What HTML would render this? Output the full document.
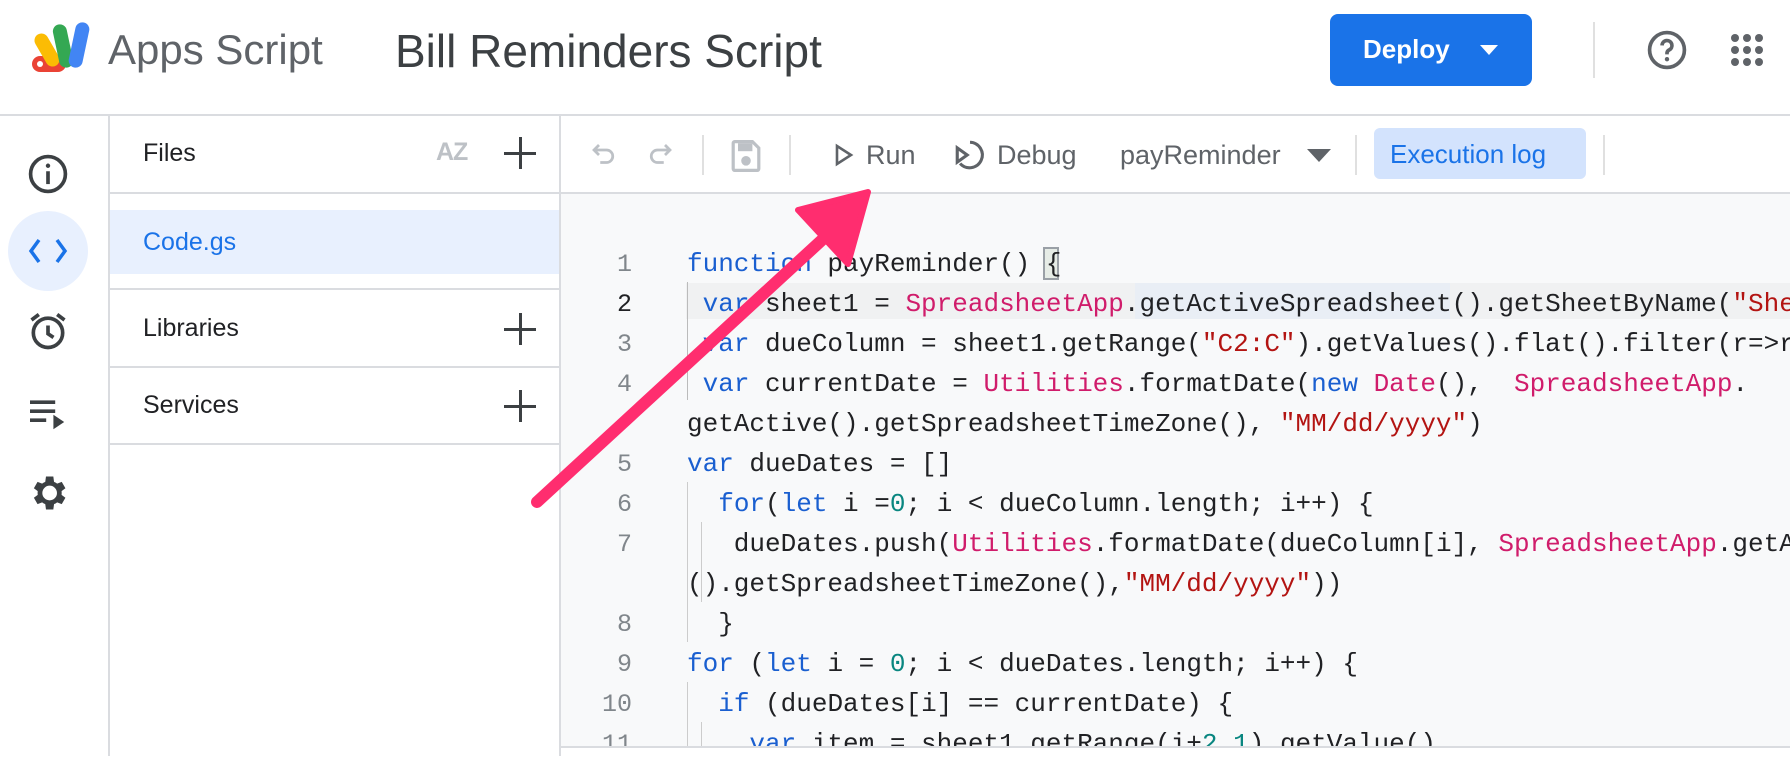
<!DOCTYPE html>
<html><head><meta charset="utf-8"><style>
*{margin:0;padding:0;box-sizing:border-box}
body{width:1790px;height:756px;overflow:hidden;background:#fff;font-family:"Liberation Sans",Arial,sans-serif;position:relative;color:#202124}
.abs{position:absolute}
.hl{border-top:2px solid #dadce0}
.code{font-family:"Liberation Mono",monospace;font-size:26px;color:#202124;white-space:pre;line-height:40px}
.ln{position:absolute;width:72px;text-align:right;left:560px;font-family:"Liberation Mono",monospace;font-size:25px;color:#80868b}
.k{color:#1a5fd0}.c{color:#d01c6b}.s{color:#b31412}.n{color:#098680}
.tb{position:absolute;top:140px;font-size:27px;color:#5f6368}
</style></head><body>
<svg class="abs" style="left:30px;top:22px" width="68" height="54" viewBox="0 0 68 54">
<rect x="2" y="34" width="34" height="16" rx="8" fill="#ea4335"/>
<rect x="10" y="10" width="14" height="36" rx="7" fill="#fbbc04" transform="rotate(-30 17 28)"/>
<rect x="26" y="2" width="14" height="44" rx="7" fill="#34a853" transform="rotate(-12 33 24)"/>
<rect x="42" y="0" width="14" height="46" rx="7" fill="#4285f4" transform="rotate(12 49 23)"/>
<circle cx="10" cy="42" r="3" fill="#fff"/>
</svg>
<div class="abs" style="left:108px;top:26px;font-size:42px;color:#5f6368">Apps Script</div>
<div class="abs" style="left:395px;top:24px;font-size:46px;color:#3c4043">Bill Reminders Script</div>
<div class="abs" style="left:1330px;top:14px;width:202px;height:72px;background:#1a73e8;border-radius:8px;color:#fff;font-size:26px;font-weight:bold">
<span class="abs" style="left:33px;top:20px">Deploy</span>
<span class="abs" style="left:150px;top:31px;border-left:9px solid transparent;border-right:9px solid transparent;border-top:10px solid #fff"></span></div>
<div class="abs" style="left:1593px;top:22px;width:2px;height:56px;background:#e0e0e0"></div>
<svg class="abs" style="left:1645px;top:28px" width="44" height="44" viewBox="0 0 24 24"><circle cx="12" cy="12" r="9.5" fill="none" stroke="#5f6368" stroke-width="2"/><path d="M9.3 9.5a2.7 2.7 0 1 1 3.8 2.5c-.7.4-1.1.9-1.1 1.8v.6" fill="none" stroke="#5f6368" stroke-width="2"/><circle cx="12" cy="17" r="1.2" fill="#5f6368"/></svg>
<svg class="abs" style="left:1730px;top:33px" width="34" height="34" viewBox="0 0 34 34" fill="#5f6368">
<circle cx="5" cy="5" r="4"/><circle cx="17" cy="5" r="4"/><circle cx="29" cy="5" r="4"/><circle cx="5" cy="17" r="4"/><circle cx="17" cy="17" r="4"/><circle cx="29" cy="17" r="4"/><circle cx="5" cy="29" r="4"/><circle cx="17" cy="29" r="4"/><circle cx="29" cy="29" r="4"/></svg>
<div class="abs hl" style="left:0;top:114px;width:1790px"></div>
<div class="abs" style="left:108px;top:115px;width:2px;height:641px;background:#dadce0"></div>
<svg class="abs" style="left:26px;top:152px" width="44" height="44" viewBox="0 0 24 24"><circle cx="12" cy="12" r="9.5" fill="none" stroke="#3c4043" stroke-width="2"/><rect x="11" y="10.5" width="2" height="7" fill="#3c4043"/><circle cx="12" cy="7.5" r="1.2" fill="#3c4043"/></svg>
<div class="abs" style="left:8px;top:211px;width:80px;height:80px;border-radius:50%;background:#e8f0fe"></div>
<svg class="abs" style="left:28px;top:236px" width="40" height="30" viewBox="0 0 40 30"><path d="M11 4 3 15l8 11M29 4l8 11-8 11" fill="none" stroke="#1a73e8" stroke-width="3.5"/></svg>
<svg class="abs" style="left:26px;top:309px" width="44" height="44" viewBox="0 0 24 24" fill="none" stroke="#3c4043" stroke-width="2"><circle cx="12" cy="13" r="8"/><path d="M12 9v4.5l3 2M3 6l4-3M21 6l-4-3"/></svg>
<svg class="abs" style="left:26px;top:395px" width="44" height="36" viewBox="0 0 24 20" fill="#3c4043"><rect x="2" y="3" width="14" height="2"/><rect x="2" y="8" width="14" height="2"/><rect x="2" y="13" width="9" height="2"/><path d="M15 11v8l6-4z"/></svg>
<svg class="abs" style="left:26px;top:471px" width="44" height="44" viewBox="0 0 24 24"><path fill="#3c4043" d="M19.4 13a7.7 7.7 0 0 0 0-2l2.1-1.6-2-3.5-2.5 1a7 7 0 0 0-1.7-1L14.9 3h-4l-.4 2.9a7 7 0 0 0-1.7 1l-2.5-1-2 3.5L6.4 11a7.7 7.7 0 0 0 0 2l-2.1 1.6 2 3.5 2.5-1a7 7 0 0 0 1.7 1l.4 2.9h4l.4-2.9a7 7 0 0 0 1.7-1l2.5 1 2-3.5zM12.9 16a4 4 0 1 1 0-8 4 4 0 0 1 0 8z"/><circle cx="12.9" cy="12" r="2.4" fill="#fff"/></svg>
<div class="abs" style="left:559px;top:115px;width:2px;height:641px;background:#dadce0"></div>
<div class="abs" style="left:143px;top:139px;font-size:25px">Files</div>
<div class="abs" style="left:436px;top:138px;font-size:25px;color:#bdc1c6;font-weight:bold;letter-spacing:-1px">AZ</div>
<div class="abs" style="left:504px;top:152px;width:32px;height:3px;background:#3c4043"></div>
<div class="abs" style="left:519px;top:137px;width:3px;height:32px;background:#3c4043"></div>
<div class="abs hl" style="left:110px;top:192px;width:449px"></div>
<div class="abs" style="left:110px;top:210px;width:449px;height:64px;background:#e8f0fe"></div>
<div class="abs" style="left:143px;top:228px;font-size:25px;color:#1a73e8">Code.gs</div>
<div class="abs hl" style="left:110px;top:288px;width:449px"></div>
<div class="abs" style="left:143px;top:314px;font-size:25px">Libraries</div>
<div class="abs" style="left:504px;top:328px;width:32px;height:3px;background:#3c4043"></div>
<div class="abs" style="left:519px;top:313px;width:3px;height:32px;background:#3c4043"></div>
<div class="abs hl" style="left:110px;top:366px;width:449px"></div>
<div class="abs" style="left:143px;top:391px;font-size:25px">Services</div>
<div class="abs" style="left:504px;top:405px;width:32px;height:3px;background:#3c4043"></div>
<div class="abs" style="left:519px;top:390px;width:3px;height:32px;background:#3c4043"></div>
<div class="abs hl" style="left:110px;top:443px;width:449px"></div>
<svg class="abs" style="left:588px;top:140px" width="32" height="30" viewBox="0 0 24 24" fill="none" stroke="#bdc1c6" stroke-width="2.2"><path d="M8 4 4 8l4 4M4 8h10a5 5 0 0 1 0 10H9"/></svg>
<svg class="abs" style="left:644px;top:140px" width="32" height="30" viewBox="0 0 24 24" fill="none" stroke="#bdc1c6" stroke-width="2.2"><path d="M16 4l4 4-4 4M20 8H10a5 5 0 0 0 0 10h5"/></svg>
<div class="abs" style="left:702px;top:135px;width:2px;height:40px;background:#e0e0e0"></div>
<svg class="abs" style="left:730px;top:138px" width="32" height="36" viewBox="0 0 20 22" fill="none" stroke="#bdc1c6" stroke-width="2"><path d="M2 3a1 1 0 0 1 1-1h11l4 4v13a1 1 0 0 1-1 1H3a1 1 0 0 1-1-1z"/><rect x="5" y="3" width="9" height="5" fill="#bdc1c6" stroke="none"/><circle cx="10" cy="14" r="2" fill="#bdc1c6"/></svg>
<div class="abs" style="left:789px;top:135px;width:2px;height:40px;background:#e0e0e0"></div>
<svg class="abs" style="left:834px;top:143px" width="20" height="24" viewBox="0 0 20 24"><path d="M3 3v18l14-9z" fill="none" stroke="#5f6368" stroke-width="2.6"/></svg>
<div class="tb" style="left:866px">Run</div>
<svg class="abs" style="left:953px;top:138px" width="34" height="34" viewBox="0 0 24 24" fill="none" stroke="#5f6368" stroke-width="2.2"><path d="M12 3a9 9 0 1 1-7 15"/><path d="M3 7v10l7-5z"/></svg>
<div class="tb" style="left:997px">Debug</div>
<div class="tb" style="left:1120px;top:140px">payReminder</div>
<div class="abs" style="left:1307px;top:149px;border-left:12px solid transparent;border-right:12px solid transparent;border-top:13px solid #5f6368"></div>
<div class="abs" style="left:1355px;top:135px;width:2px;height:40px;background:#e0e0e0"></div>
<div class="abs" style="left:1374px;top:128px;width:212px;height:51px;background:#d3e3fd;border-radius:6px;color:#1a73e8;font-size:26px;padding:11px 0 0 16px">Execution log</div>
<div class="abs" style="left:1603px;top:135px;width:2px;height:40px;background:#e0e0e0"></div>
<div class="abs hl" style="left:561px;top:192px;width:1229px"></div>
<div class="abs" style="left:561px;top:194px;width:1229px;height:552px;background:#f8f9fa"></div>
<div class="abs" style="left:686px;top:283px;width:1104px;height:36px;background:#f0f1f2"></div>
<div class="abs" style="left:1135px;top:283px;width:315px;height:36px;background:#e9eef5"></div>
<div class="abs" style="left:1043px;top:247px;width:16px;height:33px;border:2px solid #9aa0a6;background:#e6ece6"></div>
<div class="abs" style="left:687px;top:282px;width:1px;height:118px;background:#bbb"></div>
<div class="abs" style="left:687px;top:482px;width:1px;height:160px;background:#ccc"></div>
<div class="abs" style="left:701px;top:522px;width:1px;height:80px;background:#ccc"></div>
<div class="abs" style="left:687px;top:682px;width:1px;height:70px;background:#ccc"></div>
<div class="abs" style="left:701px;top:722px;width:1px;height:30px;background:#ccc"></div>
<div class="ln" style="top:250px">1</div><div class="ln" style="top:290px;color:#202124">2</div><div class="ln" style="top:330px">3</div><div class="ln" style="top:370px">4</div><div class="ln" style="top:450px">5</div><div class="ln" style="top:490px">6</div><div class="ln" style="top:530px">7</div><div class="ln" style="top:610px">8</div><div class="ln" style="top:650px">9</div><div class="ln" style="top:690px">10</div><div class="ln" style="top:730px">11</div>
<div class="abs code" style="left:687px;top:244px;height:502px;overflow:hidden;width:1103px"><span class="k">function</span> payReminder() {
 <span class="k">var</span> sheet1 = <span class="c">SpreadsheetApp</span>.getActiveSpreadsheet().getSheetByName(<span class="s">"Sheet1"</span>)
 <span class="k">var</span> dueColumn = sheet1.getRange(<span class="s">"C2:C"</span>).getValues().flat().filter(r=>r)
 <span class="k">var</span> currentDate = <span class="c">Utilities</span>.formatDate(<span class="k">new</span> <span class="c">Date</span>(),  <span class="c">SpreadsheetApp</span>.
getActive().getSpreadsheetTimeZone(), <span class="s">"MM/dd/yyyy"</span>)
<span class="k">var</span> dueDates = []
  <span class="k">for</span>(<span class="k">let</span> i =<span class="n">0</span>; i &lt; dueColumn.length; i++) {
   dueDates.push(<span class="c">Utilities</span>.formatDate(dueColumn[i], <span class="c">SpreadsheetApp</span>.getActive
().getSpreadsheetTimeZone(),<span class="s">"MM/dd/yyyy"</span>))
  }
<span class="k">for</span> (<span class="k">let</span> i = <span class="n">0</span>; i &lt; dueDates.length; i++) {
  <span class="k">if</span> (dueDates[i] == currentDate) {
    <span class="k">var</span> item = sheet1.getRange(i+<span class="n">2</span>,<span class="n">1</span>).getValue()</div>
<div class="abs" style="left:561px;top:746px;width:1229px;height:10px;background:#fff;border-top:2px solid #dadce0"></div>
<svg class="abs" style="left:0;top:0" width="1790" height="756"><path d="M537 502 L835 228" stroke="#ff2d6f" stroke-width="12" stroke-linecap="round"/><path d="M868 192 L798 210 L848 264 Z" fill="#ff2d6f" stroke="#ff2d6f" stroke-width="6" stroke-linejoin="round"/></svg>
</body></html>
